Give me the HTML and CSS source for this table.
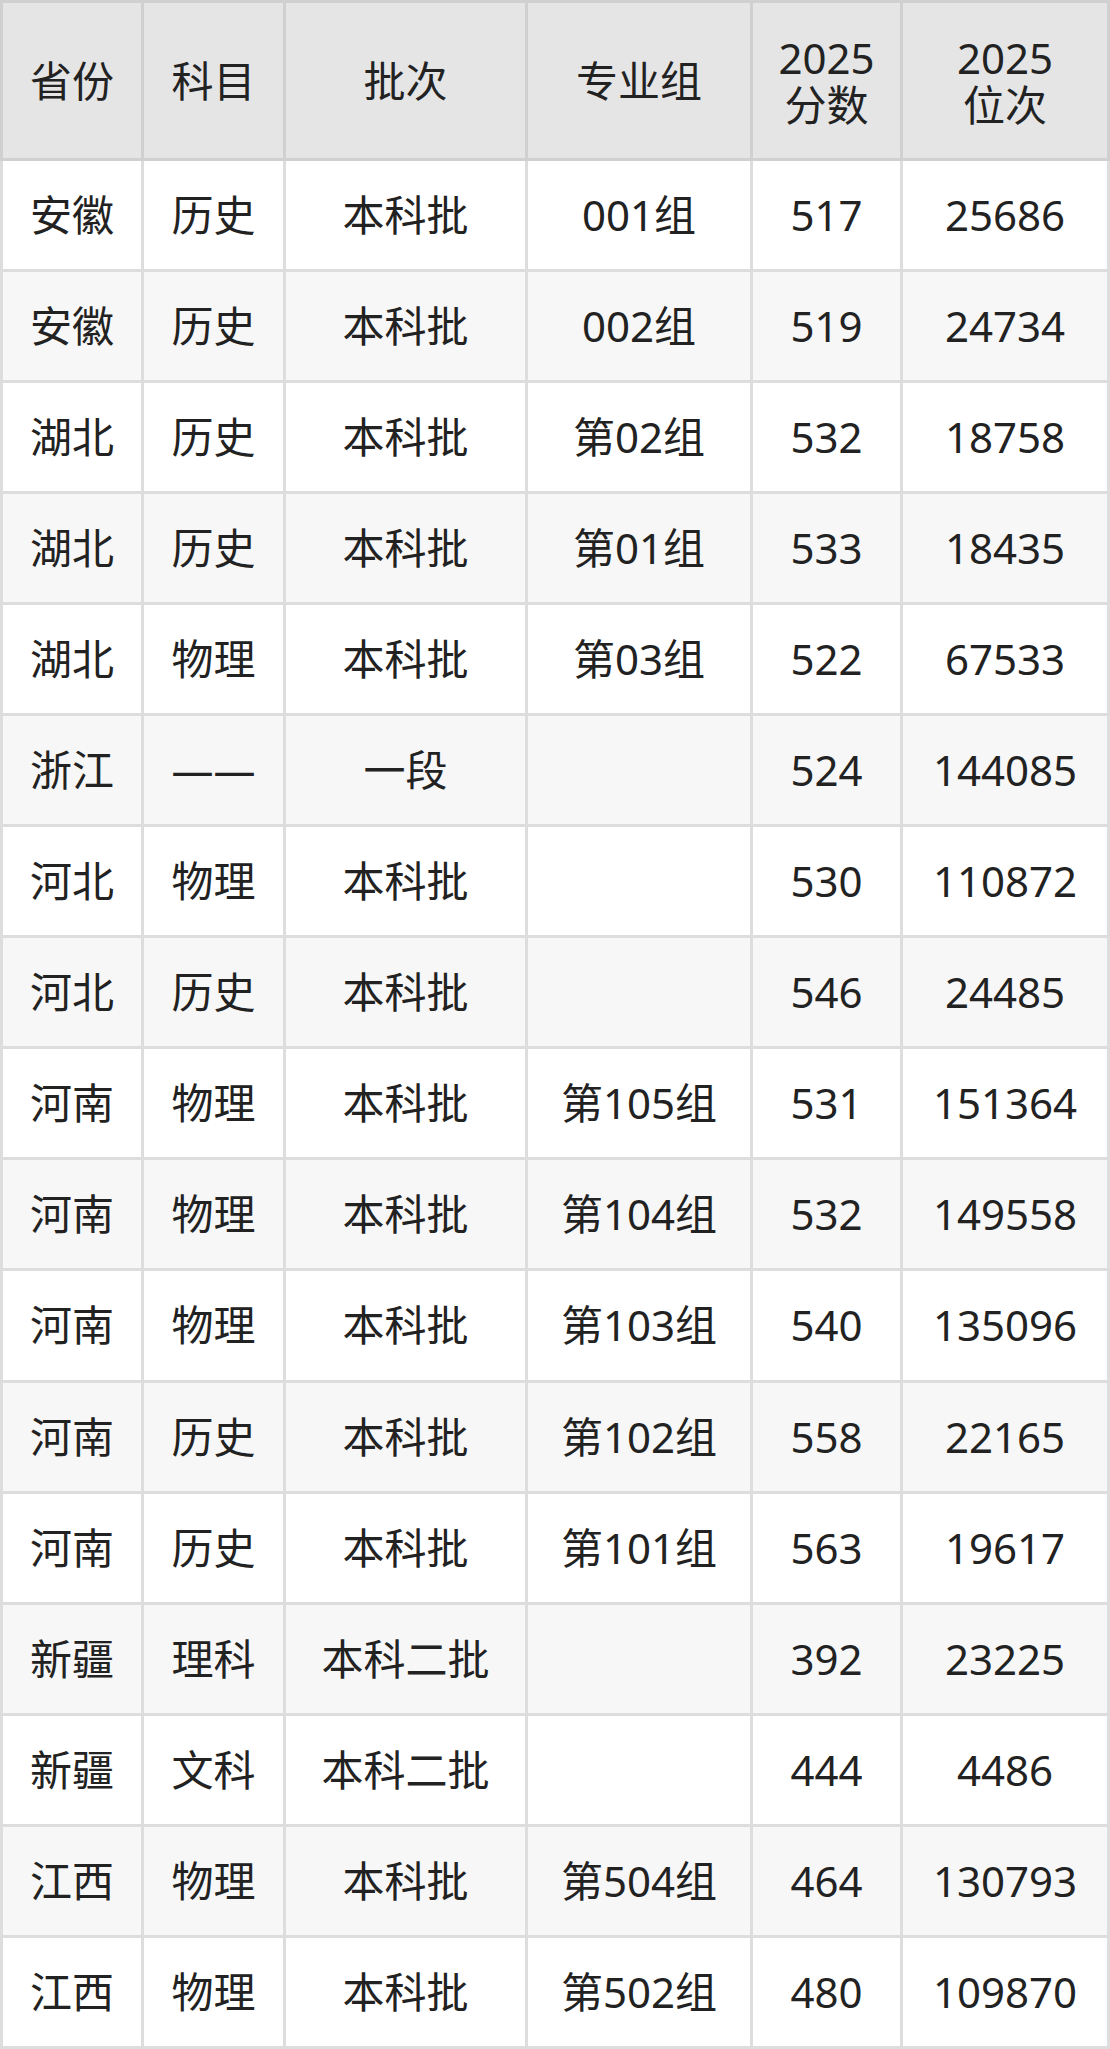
FILE: index.html
```html
<!DOCTYPE html>
<html lang="zh-CN">
<head>
<meta charset="utf-8">
<title>分数线</title>
<link rel="stylesheet" href="styles.css">
</head>
<body>
<table class="score-table">
  <colgroup>
    <col class="c1"><col class="c2"><col class="c3"><col class="c4"><col class="c5"><col class="c6">
  </colgroup>
  <thead>
    <tr class="head-row">
      <th>省份</th><th>科目</th><th>批次</th><th>专业组</th><th>2025<br>分数</th><th>2025<br>位次</th>
    </tr>
  </thead>
  <tbody>
    <tr><td>安徽</td><td>历史</td><td>本科批</td><td>001组</td><td>517</td><td>25686</td></tr>
    <tr><td>安徽</td><td>历史</td><td>本科批</td><td>002组</td><td>519</td><td>24734</td></tr>
    <tr><td>湖北</td><td>历史</td><td>本科批</td><td>第02组</td><td>532</td><td>18758</td></tr>
    <tr><td>湖北</td><td>历史</td><td>本科批</td><td>第01组</td><td>533</td><td>18435</td></tr>
    <tr><td>湖北</td><td>物理</td><td>本科批</td><td>第03组</td><td>522</td><td>67533</td></tr>
    <tr><td>浙江</td><td>——</td><td>一段</td><td></td><td>524</td><td>144085</td></tr>
    <tr><td>河北</td><td>物理</td><td>本科批</td><td></td><td>530</td><td>110872</td></tr>
    <tr><td>河北</td><td>历史</td><td>本科批</td><td></td><td>546</td><td>24485</td></tr>
    <tr><td>河南</td><td>物理</td><td>本科批</td><td>第105组</td><td>531</td><td>151364</td></tr>
    <tr><td>河南</td><td>物理</td><td>本科批</td><td>第104组</td><td>532</td><td>149558</td></tr>
    <tr><td>河南</td><td>物理</td><td>本科批</td><td>第103组</td><td>540</td><td>135096</td></tr>
    <tr><td>河南</td><td>历史</td><td>本科批</td><td>第102组</td><td>558</td><td>22165</td></tr>
    <tr><td>河南</td><td>历史</td><td>本科批</td><td>第101组</td><td>563</td><td>19617</td></tr>
    <tr><td>新疆</td><td>理科</td><td>本科二批</td><td></td><td>392</td><td>23225</td></tr>
    <tr><td>新疆</td><td>文科</td><td>本科二批</td><td></td><td>444</td><td>4486</td></tr>
    <tr><td>江西</td><td>物理</td><td>本科批</td><td>第504组</td><td>464</td><td>130793</td></tr>
    <tr><td>江西</td><td>物理</td><td>本科批</td><td>第502组</td><td>480</td><td>109870</td></tr>
  </tbody>
</table>
</body>
</html>
```
FILE: styles.css
```css
html, body {
  margin: 0;
  padding: 0;
  background: #ffffff;
}

.score-table {
  width: 1110px;
  border-collapse: collapse;
  table-layout: fixed;
  font-family: "Noto Sans", "Noto Sans CJK SC", sans-serif;
  font-size: 42px;
  color: #222222;
}

.c1 { width: 141px; }
.c2 { width: 142px; }
.c3 { width: 242px; }
.c4 { width: 225px; }
.c5 { width: 150px; }
.c6 { width: 207px; }

.score-table th,
.score-table td {
  padding: 0;
  text-align: center;
  vertical-align: middle;
  white-space: nowrap;
}

.score-table th {
  background: #e5e5e5;
  border: 3px solid #d0d0d0;
  font-weight: normal;
  line-height: 47px;
}

.head-row {
  height: 158px;
}

.score-table tbody tr {
  height: 111.06px;
}

.score-table td {
  border: 3px solid #dddddd;
  line-height: 50px;
}

.score-table tbody tr:nth-child(even) td {
  background: #f7f7f7;
}
```
